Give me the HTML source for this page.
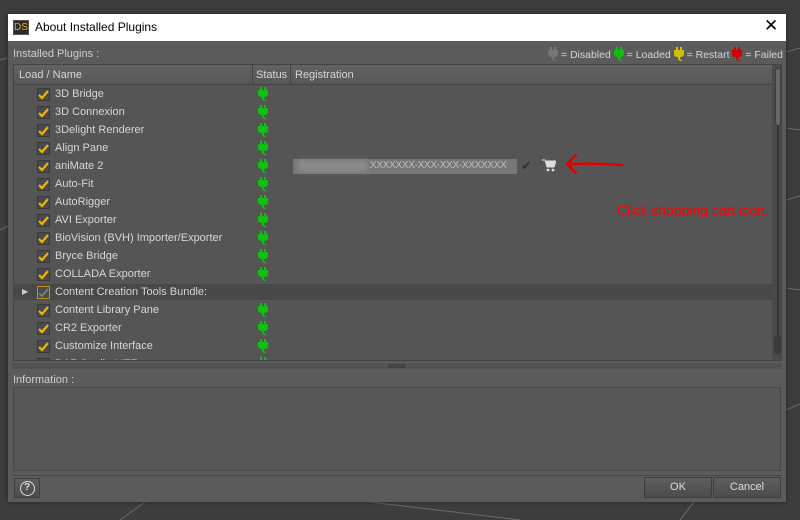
<!DOCTYPE html>
<html><head><meta charset="utf-8"><style>
*{margin:0;padding:0;box-sizing:border-box}
body{width:800px;height:520px;background:#3d3d3d;font-family:"Liberation Sans",sans-serif;font-size:11px;color:#d6d6d6;position:relative;overflow:hidden}
.abs{position:absolute}
#dlg{left:8px;top:14px;width:778px;height:488px;background:#5b5b5b;box-shadow:0 0 4px #222}
#title{left:0;top:0;width:778px;height:27px;background:#fff;color:#000;font-size:12px}
.row{position:absolute;left:0;height:18px;width:758px}
.cb{position:absolute;left:23px;top:3px;width:13px;height:13px;background:#4a4a4a;border:1px solid #3a3a3a}
.nm{position:absolute;left:41px;top:3px;white-space:nowrap}
.pl{position:absolute;left:244px;top:2px}
.btn{background:linear-gradient(#5e5e5e,#4c4c4c);border:1px solid #3e3e3e;text-align:center;color:#ddd}
</style></head><body>
<svg class="abs" style="left:0;top:0" width="800" height="520"><g stroke="#6a6a6a" stroke-width="1" fill="none"><line x1="0" y1="60" x2="8" y2="58"/><line x1="0" y1="230" x2="8" y2="226"/><line x1="786" y1="52" x2="800" y2="48"/><line x1="786" y1="128" x2="800" y2="130"/><line x1="786" y1="200" x2="800" y2="196"/><line x1="786" y1="288" x2="800" y2="290"/><line x1="786" y1="410" x2="800" y2="404"/><line x1="145" y1="502" x2="120" y2="520"/><line x1="370" y1="502" x2="520" y2="520"/><line x1="694" y1="502" x2="680" y2="520"/></g></svg>
<div id="dlg" class="abs">
 <div id="title" class="abs">
  <div class="abs" style="left:5px;top:6px;width:16px;height:15px;background:#2b2b2b;border:1px solid #555;color:#e0b020;font-size:10px;line-height:13px;text-align:center">DS</div>
  <div class="abs" style="left:27px;top:6px">About Installed Plugins</div>
  <div class="abs" style="left:756px;top:2px;font-size:17px">✕</div>
 </div>
 <div class="abs" style="left:5px;top:34px;color:#cfcfcf">Installed Plugins :</div>
 <div class="abs" style="left:540px;top:33px;white-space:nowrap;color:#d6d6d6;font-size:10.5px">
  <svg width="10" height="14" style="vertical-align:-3px"><g fill="#777"><rect x="2" y="0" width="2" height="4"/><rect x="6" y="0" width="2" height="4"/><path d="M0 3h10v4q0 3-4 3h-2q-4 0-4-3z"/><path d="M4 9h2v2q0 2 2 2v1q-4 0-4-3z"/></g></svg> = Disabled
  <svg width="10" height="14" style="vertical-align:-3px"><g fill="#10c010"><rect x="2" y="0" width="2" height="4"/><rect x="6" y="0" width="2" height="4"/><path d="M0 3h10v4q0 3-4 3h-2q-4 0-4-3z"/><path d="M4 9h2v2q0 2 2 2v1q-4 0-4-3z"/></g></svg> = Loaded
  <svg width="10" height="14" style="vertical-align:-3px"><g fill="#d0c000"><rect x="2" y="0" width="2" height="4"/><rect x="6" y="0" width="2" height="4"/><path d="M0 3h10v4q0 3-4 3h-2q-4 0-4-3z"/><path d="M4 9h2v2q0 2 2 2v1q-4 0-4-3z"/></g></svg> = Restart
  <svg width="10" height="14" style="vertical-align:-3px"><g fill="#d00000"><rect x="2" y="0" width="2" height="4"/><rect x="6" y="0" width="2" height="4"/><path d="M0 3h10v4q0 3-4 3h-2q-4 0-4-3z"/><path d="M4 9h2v2q0 2 2 2v1q-4 0-4-3z"/></g></svg> = Failed
 </div>
 <div class="abs" style="left:5px;top:50px;width:769px;height:297px;background:#555;border:1px solid #444;overflow:hidden">
  <div class="abs" style="left:0;top:0;width:758px;height:20px;background:linear-gradient(#626262,#575757);border-bottom:1px solid #444"></div>
  <div class="abs" style="left:238px;top:0;width:1px;height:20px;background:#444"></div>
  <div class="abs" style="left:276px;top:0;width:1px;height:20px;background:#444"></div>
  <div class="abs" style="left:5px;top:4px">Load / Name</div>
  <div class="abs" style="left:242px;top:4px">Status</div>
  <div class="abs" style="left:281px;top:4px">Registration</div>
  <div class="abs" style="left:0;top:219px;width:758px;height:16px;background:#484848"></div>
  <div id="rows"></div>
  <div class="abs" style="left:279px;top:94px;width:224px;height:15px;background:#777"></div>
  <div class="abs" style="left:284px;top:95px;width:70px;height:12px;background:#8a8a8a;filter:blur(2px)"></div>
  <div class="abs" style="left:356px;top:95px;color:#bdbdbd;font-size:10px;letter-spacing:-0.3px">XXXXXXX-XXX-XXX-XXXXXXX</div>
  <div class="abs" style="left:507px;top:93px;color:#333;font-size:13px">✔</div>
  <svg class="abs" style="left:528px;top:94px" width="14" height="13"><path d="M0 1h3l2 7h7l2-6H4" fill="#ddd" stroke="#ddd" stroke-width="1"/><rect x="4" y="2" width="9" height="5" fill="#ddd"/><circle cx="6" cy="11" r="1.4" fill="#ddd"/><circle cx="11" cy="11" r="1.4" fill="#ddd"/></svg>
  <svg class="abs" style="left:548px;top:87px" width="62" height="24"><path d="M60 13 Q35 11 6 12 M14 3 L5 12 L14 21" stroke="#e00000" stroke-width="2.5" fill="none" stroke-linecap="round"/></svg>
  <div class="abs" style="left:603px;top:137px;color:#f00;font-size:14px;white-space:nowrap">Click shopping cart icon.</div>
  <div class="abs" style="left:758px;top:0;width:10px;height:297px;background:#4a4a4a"></div>
  <div class="abs" style="left:761px;top:3px;width:6px;height:58px;background:#686868;border:1px solid #3e3e3e;border-radius:3px"></div>
  <div class="abs" style="left:763px;top:61px;width:2px;height:210px;background:#333"></div>
  <div class="abs" style="left:760px;top:271px;width:8px;height:18px;background:#3a3a3a;border-radius:3px"></div>
 </div>
 <div class="abs" style="left:4px;top:349px;width:770px;height:6px;background:#535353"></div>
 <div class="abs" style="left:380px;top:350px;width:18px;height:4px;background:#444"></div>
 <div class="abs" style="left:5px;top:360px;color:#cfcfcf">Information :</div>
 <div class="abs" style="left:5px;top:373px;width:768px;height:84px;background:#565656;border:1px solid #474747"></div>
 <div class="abs" style="left:4px;top:461px;width:770px;height:1px;background:#474747"></div>
 <div class="abs btn" style="left:6px;top:464px;width:26px;height:20px"><div style="width:15px;height:15px;border:1.5px solid #ddd;border-radius:50%;margin:2px auto;font-size:10px;line-height:12px;font-weight:bold">?</div></div>
 <div class="abs btn" style="left:636px;top:463px;width:68px;height:21px;line-height:19px">OK</div>
 <div class="abs btn" style="left:705px;top:463px;width:68px;height:21px;line-height:19px">Cancel</div>
</div>
<script>
var n=["3D Bridge","3D Connexion","3Delight Renderer","Align Pane","aniMate 2","Auto-Fit","AutoRigger","AVI Exporter","BioVision (BVH) Importer/Exporter","Bryce Bridge","COLLADA Exporter","Content Creation Tools Bundle:","Content Library Pane","CR2 Exporter","Customize Interface","DAZ Studio LITE"];
var plug='<svg width="10" height="14"><g fill="#10c010"><rect x="2" y="0" width="2" height="4"/><rect x="6" y="0" width="2" height="4"/><path d="M0 3h10v4q0 3-4 3h-2q-4 0-4-3z"/><path d="M4 9h2v2q0 2 2 2v1q-4 0-4-3z"/></g></svg>';
var h="";
n.forEach(function(t,i){var top=20+18*i;
var grp=i==11;
h+='<div class="row" style="top:'+top+'px">'+(grp?'<div style="position:absolute;left:8px;top:4px;font-size:8px;color:#ccc">▶</div>':'')+
'<div class="cb" style="'+(grp?'border-color:#c09020':'')+'"><svg width="11" height="11" style="position:absolute;left:0;top:0"><path d="M1 6l3 3 6-7" stroke="'+(grp?'#777':'#f4b400')+'" stroke-width="2.2" fill="none"/></svg></div>'+
'<div class="nm">'+t+'</div>'+(grp?'':'<div class="pl">'+plug+'</div>')+'</div>';});
document.getElementById("rows").innerHTML=h;
</script>
</body></html>
